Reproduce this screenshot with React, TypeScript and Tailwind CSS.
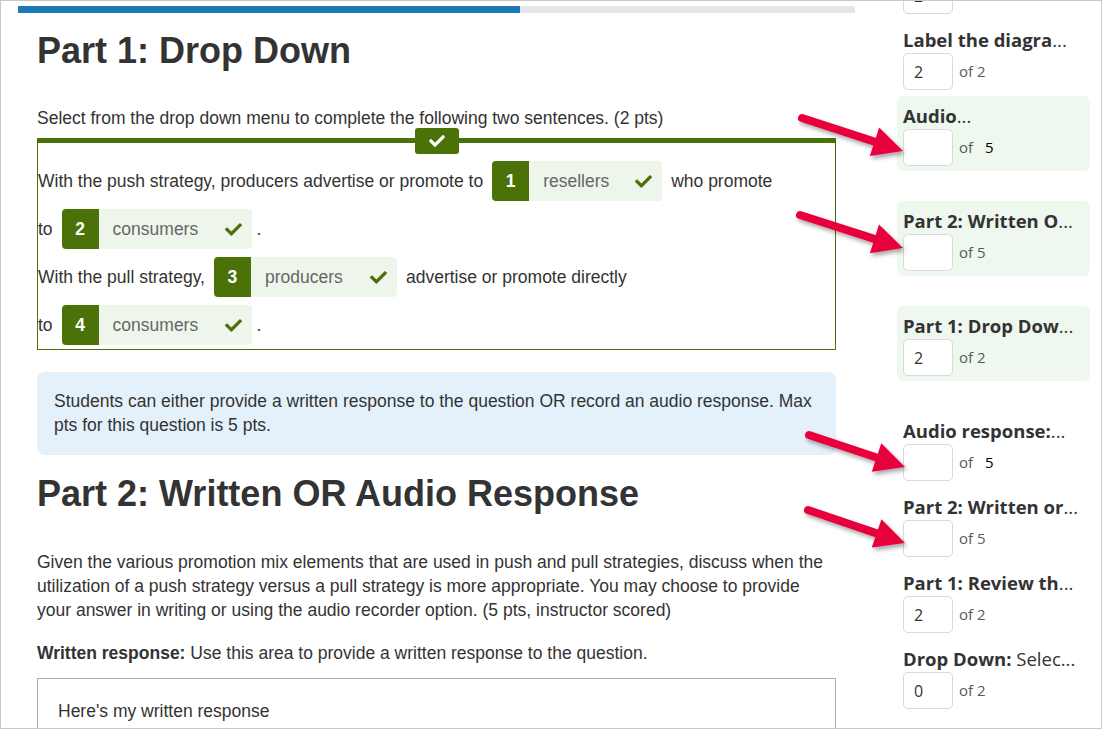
import { FaCheck } from "react-icons/fa";

type Blank = { n: number; answer: string; width: string };

type Score = {
  title: string;
  rest?: string;
  value: string;
  total: string;
  highlight?: boolean;
  loose?: boolean;
};

const SCORES: Score[] = [
  { title: "Label the diagra", value: "2", total: "2" },
  { title: "Audio", value: "", total: "5", highlight: true, loose: true },
  { title: "Part 2: Written O", value: "", total: "5", highlight: true },
  { title: "Part 1: Drop Dow", value: "2", total: "2", highlight: true },
  { title: "Audio response:", value: "", total: "5", loose: true },
  { title: "Part 2: Written or", value: "", total: "5" },
  { title: "Part 1: Review th", value: "2", total: "2" },
  { title: "Drop Down:", rest: " Selec", value: "0", total: "2" },
];

// callout arrows pointing at the empty score inputs
const ARROWS = [
  { from: [802, 118], to: [903, 151] },
  { from: [800, 215], to: [903, 248] },
  { from: [809, 435], to: [905, 467] },
  { from: [808, 510], to: [905, 543] },
];

const inputCls =
  "flex h-[37px] w-[50px] items-center rounded-[5px] border border-[#d9d9d9] bg-white pl-[10px] text-[16px] text-[#333]";

const BlankChip = ({ blank }: { blank: Blank }) => (
  <span className={`mx-[9px] inline-flex h-[40px] shrink-0 overflow-hidden rounded-[4px] ${blank.width}`}>
    <span className="flex w-[37px] items-center justify-center bg-[#4b7208] font-bold text-white">
      {blank.n}
    </span>
    <span className="flex flex-1 items-center bg-[#eef6ec] pl-[14px] pr-[10px] text-[#666]">
      {blank.answer}
      <FaCheck className="ml-auto h-[17px] w-[17px] text-[#4b7208]" />
    </span>
  </span>
);

const Row = ({ children }: { children: React.ReactNode }) => (
  <div className="flex h-[48px] items-center whitespace-nowrap">{children}</div>
);

const ScoreItem = ({ item }: { item: Score }) => (
  <div
    className={
      item.highlight
        ? "mb-[30px] rounded-[6px] bg-[#eef8ef] px-[6px] pt-[6px] pb-[5px]"
        : "px-[6px] pt-[6px] pb-[6px]"
    }
  >
    <div className="whitespace-nowrap text-[18.5px] leading-[27px] font-bold text-[#333]">
      {item.title}
      {item.rest && <span className="font-normal">{item.rest}</span>}
      <span className="font-normal">...</span>
    </div>
    <div className="flex items-center">
      <div className={inputCls}>{item.value}</div>
      {item.loose ? (
        <span className="ml-[6px] text-[15px] text-[#5a5a5a]">
          of<span className="ml-[12px] text-black">{item.total}</span>
        </span>
      ) : (
        <span className="ml-[6px] text-[15px] text-[#5a5a5a]">of {item.total}</span>
      )}
    </div>
  </div>
);

const Arrow = ({ from, to }: { from: number[]; to: number[] }) => {
  const dx = to[0] - from[0];
  const dy = to[1] - from[1];
  const len = Math.hypot(dx, dy);
  const ux = dx / len;
  const uy = dy / len;
  const bx = to[0] - ux * 30;
  const by = to[1] - uy * 30;
  const head = `${to[0]},${to[1]} ${bx - uy * 15},${by + ux * 15} ${bx + uy * 15},${by - ux * 15}`;
  return (
    <g filter="url(#arrow-shadow)">
      <line x1={from[0]} y1={from[1]} x2={bx + ux * 4} y2={by + uy * 4} stroke="#e8003d" strokeWidth={8} strokeLinecap="round" />
      <polygon points={head} fill="#e8003d" />
    </g>
  );
};

export default function App() {
  const b = (n: number, answer: string, width: string): Blank => ({ n, answer, width });

  return (
    <div className="relative flex h-[729px] w-[1102px] overflow-hidden border border-[#c8c8c8] bg-white font-['Liberation_Sans',Arial,sans-serif] text-[17.5px] text-[#333]">
      {/* question column */}
      <div className="ml-[17px] w-[837px] shrink-0 pt-[5px]">
        <div className="flex h-[7px]">
          <div className="w-[502px] bg-[#1b7bb8]" />
          <div className="flex-1 bg-[#e6e6e6]" />
        </div>

        <div className="px-[19px]">
          <h1 className="mt-[17px] text-[36px] leading-[41px] font-bold">Part 1: Drop Down</h1>
          <p className="mt-[35px] leading-6">
            Select from the drop down menu to complete the following two sentences. (2 pts)
          </p>

          <div className="relative mt-[8px] border border-t-[5px] border-[#4b7208] pt-[14px]">
            <div className="absolute -top-[15px] left-1/2 flex h-[26px] w-[44px] -translate-x-1/2 items-center justify-center rounded-[3px] bg-[#4b7208]">
              <FaCheck className="h-[16px] w-[16px] text-white" />
            </div>
            <Row>
              With the push strategy, producers advertise or promote to
              <BlankChip blank={b(1, "resellers", "w-[170px]")} />
              who promote
            </Row>
            <Row>
              to
              <BlankChip blank={b(2, "consumers", "w-[190px]")} />
              <span className="-ml-[4px]">.</span>
            </Row>
            <Row>
              With the pull strategy,
              <BlankChip blank={b(3, "producers", "w-[183px]")} />
              advertise or promote directly
            </Row>
            <Row>
              to
              <BlankChip blank={b(4, "consumers", "w-[190px]")} />
              <span className="-ml-[4px]">.</span>
            </Row>
          </div>

          <div className="mt-[22px] rounded-[8px] bg-[#e4f1fb] px-[17px] pt-[17px] pb-[18px] leading-6">
            Students can either provide a written response to the question OR record an audio response. Max
            pts for this question is 5 pts.
          </div>

          <h2 className="mt-[18px] text-[36px] leading-[41px] font-bold">Part 2: Written OR Audio Response</h2>
          <p className="mt-[36px] leading-6">
            Given the various promotion mix elements that are used in push and pull strategies, discuss when the
            utilization of a push strategy versus a pull strategy is more appropriate. You may choose to provide
            your answer in writing or using the audio recorder option. (5 pts, instructor scored)
          </p>
          <p className="mt-[19px] leading-6">
            <span className="font-bold">Written response:</span> Use this area to provide a written response to the
            question.
          </p>
          <div className="mt-[13px] h-[120px] border border-[#ababab] px-[20px] pt-[20px] leading-6">
            Here's my written response
          </div>
        </div>
      </div>

      {/* score sidebar, scrolled so the first item's input shows at the top */}
      <div className="ml-[42px] w-[193px] shrink-0 font-['Open_Sans',sans-serif]">
        <div className="mt-[-24px] px-[6px] pb-[6px]">
          <div className={inputCls}>2</div>
        </div>
        {SCORES.map((item) => (
          <ScoreItem key={item.title} item={item} />
        ))}
      </div>

      <svg className="pointer-events-none absolute top-[-1px] left-[-1px]" width={1102} height={729}>
        <defs>
          <filter id="arrow-shadow" x="-20%" y="-20%" width="140%" height="160%">
            <feDropShadow dx="2" dy="3" stdDeviation="2" floodColor="#000" floodOpacity="0.35" />
          </filter>
        </defs>
        {ARROWS.map((a, i) => (
          <Arrow key={i} from={a.from} to={a.to} />
        ))}
      </svg>
    </div>
  );
}
